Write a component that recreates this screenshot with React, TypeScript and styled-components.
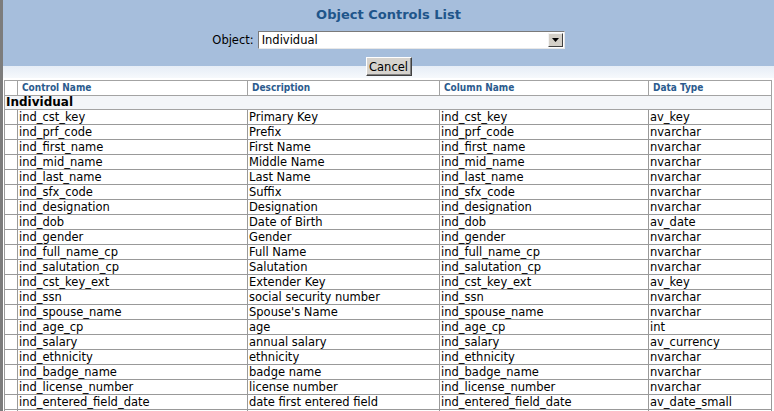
import styled, { createGlobalStyle } from 'styled-components';

const GlobalStyle = createGlobalStyle`
  html, body {
    margin: 0;
    padding: 0;
    background: #ffffff;
    font-family: "DejaVu Sans", Verdana, sans-serif;
  }
`;

type Row = [string, string, string, string];

const rows: Row[] = [
  ['ind_cst_key', 'Primary Key', 'ind_cst_key', 'av_key'],
  ['ind_prf_code', 'Prefix', 'ind_prf_code', 'nvarchar'],
  ['ind_first_name', 'First Name', 'ind_first_name', 'nvarchar'],
  ['ind_mid_name', 'Middle Name', 'ind_mid_name', 'nvarchar'],
  ['ind_last_name', 'Last Name', 'ind_last_name', 'nvarchar'],
  ['ind_sfx_code', 'Suffix', 'ind_sfx_code', 'nvarchar'],
  ['ind_designation', 'Designation', 'ind_designation', 'nvarchar'],
  ['ind_dob', 'Date of Birth', 'ind_dob', 'av_date'],
  ['ind_gender', 'Gender', 'ind_gender', 'nvarchar'],
  ['ind_full_name_cp', 'Full Name', 'ind_full_name_cp', 'nvarchar'],
  ['ind_salutation_cp', 'Salutation', 'ind_salutation_cp', 'nvarchar'],
  ['ind_cst_key_ext', 'Extender Key', 'ind_cst_key_ext', 'av_key'],
  ['ind_ssn', 'social security number', 'ind_ssn', 'nvarchar'],
  ['ind_spouse_name', "Spouse's Name", 'ind_spouse_name', 'nvarchar'],
  ['ind_age_cp', 'age', 'ind_age_cp', 'int'],
  ['ind_salary', 'annual salary', 'ind_salary', 'av_currency'],
  ['ind_ethnicity', 'ethnicity', 'ind_ethnicity', 'nvarchar'],
  ['ind_badge_name', 'badge name', 'ind_badge_name', 'nvarchar'],
  ['ind_license_number', 'license number', 'ind_license_number', 'nvarchar'],
  ['ind_entered_field_date', 'date first entered field', 'ind_entered_field_date', 'av_date_small'],
  // next row only shows its top edge in the window
  ['', '', '', ''],
];

const columns = [13, 230, 192, 209, 123];

const App = () => {
  return (
    <Frame>
      <GlobalStyle />
      <Header>
        <Title>Object Controls List</Title>
        <SelectRow>
          <Label>Object:</Label>
          <SelectBox>
            <SelectText>Individual</SelectText>
            <DropButton>
              <svg width="7" height="4" viewBox="0 0 7 4">
                <path d="M0 0h7L3.5 4z" fill="#000" />
              </svg>
            </DropButton>
          </SelectBox>
        </SelectRow>
        <Button type="button">Cancel</Button>
      </Header>
      <Table>
        <colgroup>
          {columns.map((w, i) => (
            <col key={i} style={{ width: w }} />
          ))}
        </colgroup>
        <thead>
          <tr>
            <Th></Th>
            <Th>Control Name</Th>
            <Th>Description</Th>
            <Th>Column Name</Th>
            <Th>Data Type</Th>
          </tr>
        </thead>
        <tbody>
          <tr>
            <GroupCell colSpan={5}>Individual</GroupCell>
          </tr>
          {rows.map((r, i) => (
            <tr key={i}>
              <Td></Td>
              <Td>{r[0]}</Td>
              <Td>{r[1]}</Td>
              <Td>{r[2]}</Td>
              <Td>{r[3]}</Td>
            </tr>
          ))}
        </tbody>
      </Table>
    </Frame>
  );
};

const Frame = styled.div`
  min-height: 411px;
  border-left: 3px solid #7c7c7c;
  box-sizing: border-box;
`;

const Header = styled.div`
  height: 78px;
  display: flex;
  flex-direction: column;
  align-items: center;
  background: linear-gradient(to bottom, #a6bedc 0, #a6bedc 66px, #e6edf6 66px, #f6f9fc 78px);
`;

const Title = styled.h1`
  margin: 5px 0 0 0;
  height: 20px;
  line-height: 20px;
  font-size: 13px;
  font-weight: bold;
  color: #20558a;
`;

const SelectRow = styled.div`
  display: flex;
  align-items: center;
  gap: 4px;
  margin-top: 6px;
  height: 18px;
`;

const Label = styled.span`
  font-size: 11.5px;
  color: #000;
`;

const SelectBox = styled.div`
  display: flex;
  align-items: center;
  width: 307px;
  height: 18px;
  box-sizing: border-box;
  background: #fff;
  border: 1px solid;
  border-color: #7a7a7a #e8e8e8 #e8e8e8 #7a7a7a;
  padding: 1px;
`;

const SelectText = styled.span`
  flex: 1;
  font-size: 11.5px;
  padding-left: 2px;
`;

const DropButton = styled.span`
  display: flex;
  align-items: center;
  justify-content: center;
  width: 15px;
  height: 14px;
  box-sizing: border-box;
  background: #d4d0c8;
  border: 1px solid;
  border-color: #f4f4f4 #404040 #404040 #f4f4f4;
`;

const Button = styled.button`
  margin-top: 8px;
  width: 46px;
  height: 19px;
  padding: 0;
  font-family: "DejaVu Sans", Verdana, sans-serif;
  font-size: 11.5px;
  color: #000;
  background: #d6d3ce;
  border: 1px solid;
  border-color: #ffffff #404040 #404040 #ffffff;
  box-shadow: inset -1px -1px 0 #808080;
`;

const Table = styled.table`
  margin: 2px 0 0 1px;
  width: 767px;
  table-layout: fixed;
  border-collapse: collapse;
  border: 1px solid #8a8a8a;
`;

const Th = styled.th`
  height: 14px;
  padding: 0 0 0 4px;
  text-align: left;
  font-family: "DejaVu Sans Condensed", "DejaVu Sans", sans-serif;
  font-size: 10px;
  font-weight: bold;
  line-height: 14px;
  color: #2b5b8e;
  background: #ffffff;
  border: 1px solid #a3a3a3;
  white-space: nowrap;
  overflow: hidden;
`;

const GroupCell = styled.td`
  height: 13px;
  padding: 0 0 0 1px;
  font-size: 12px;
  font-weight: bold;
  line-height: 13px;
  color: #000;
  background: #f3f5f8;
  border: 1px solid #a3a3a3;
`;

const Td = styled.td`
  height: 14px;
  padding: 0 0 0 1px;
  font-size: 11.5px;
  line-height: 14px;
  color: #000;
  border: 1px solid #999999;
  white-space: nowrap;
  overflow: hidden;
`;

export default App;
